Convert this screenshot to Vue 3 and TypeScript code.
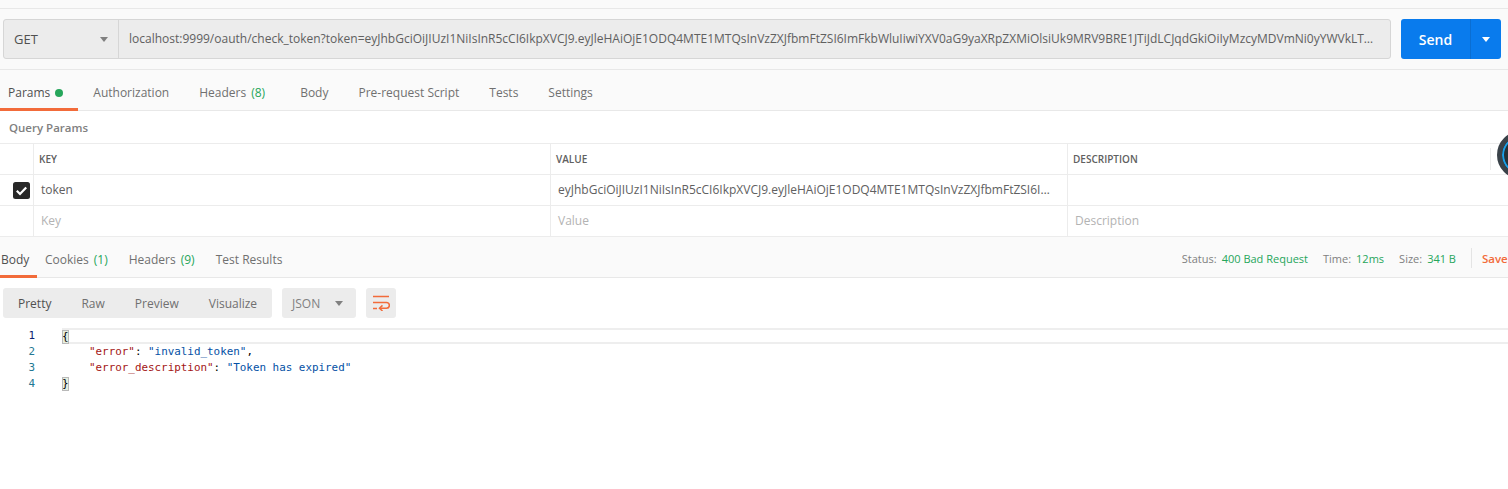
<script setup lang="ts">
interface Tab { label: string; count?: string; dot?: boolean; active?: boolean }
const reqTabs: Tab[] = [
  { label: 'Params', dot: true, active: true },
  { label: 'Authorization' },
  { label: 'Headers', count: '(8)' },
  { label: 'Body' },
  { label: 'Pre-request Script' },
  { label: 'Tests' },
  { label: 'Settings' },
]
const resTabs: Tab[] = [
  { label: 'Body', active: true },
  { label: 'Cookies', count: '(1)' },
  { label: 'Headers', count: '(9)' },
  { label: 'Test Results' },
]
const url = 'localhost:9999/oauth/check_token?token=eyJhbGciOiJIUzI1NiIsInR5cCI6IkpXVCJ9.eyJleHAiOjE1ODQ4MTE1MTQsInVzZXJfbmFtZSI6ImFkbWluIiwiYXV0aG9yaXRpZXMiOlsiUk9MRV9BRE1JTiJdLCJqdGkiOiIyMzcyMDVmNi0yYWVkLTQ5YjEtOGE3ZS1hNjE2OTk3ZTA4MGMiLCJjbGllbnRfaWQiOiJ0ZXN0In0'
const value = 'eyJhbGciOiJIUzI1NiIsInR5cCI6IkpXVCJ9.eyJleHAiOjE1ODQ4MTE1MTQsInVzZXJfbmFtZSI6ImFkbWluIiwiYXV0aG9yaXRpZXMi'
</script>

<template>
  <div class="page">
    <div class="top-strip"></div>
    <div class="request-bar">
      <div class="url-group">
        <div class="method"><span>GET</span><i class="caret gray"></i></div>
        <div class="url">{{ url }}</div>
      </div>
      <div class="send">
        <span class="send-label">Send</span>
        <span class="send-more"><i class="caret white"></i></span>
      </div>
    </div>

    <div class="tabs req-tabs">
      <div v-for="t in reqTabs" :key="t.label" class="tab" :class="{ active: t.active }">
        {{ t.label }}<span v-if="t.count" class="count">{{ t.count }}</span><i v-if="t.dot" class="dot"></i>
      </div>
    </div>

    <div class="query-title">Query Params</div>
    <div class="table">
      <div class="row head">
        <div class="cell check"></div>
        <div class="cell key">KEY</div>
        <div class="cell val">VALUE</div>
        <div class="cell desc">DESCRIPTION</div>
        <div class="cell end"></div>
      </div>
      <div class="row">
        <div class="cell check">
          <svg width="17" height="17" viewBox="0 0 17 17">
            <rect width="17" height="17" rx="2.5" fill="#282828" />
            <path d="M3.8 8.8 7 12 13.2 5.4" fill="none" stroke="#fff" stroke-width="2.2" />
          </svg>
        </div>
        <div class="cell key text">token</div>
        <div class="cell val text"><span class="clip">{{ value }}</span></div>
        <div class="cell desc"></div>
      </div>
      <div class="row">
        <div class="cell check"></div>
        <div class="cell key ph">Key</div>
        <div class="cell val ph">Value</div>
        <div class="cell desc ph">Description</div>
      </div>
    </div>

    <div class="tabs res-tabs">
      <div v-for="t in resTabs" :key="t.label" class="tab" :class="{ active: t.active }">
        {{ t.label }}<span v-if="t.count" class="count">{{ t.count }}</span>
      </div>
      <div class="status">
        <span>Status:<b>400 Bad Request</b></span>
        <span>Time:<b>12ms</b></span>
        <span>Size:<b>341 B</b></span>
        <i class="sep"></i>
        <span class="save">Save Response</span>
      </div>
    </div>

    <div class="toolbar">
      <div class="views">
        <span class="on">Pretty</span><span>Raw</span><span>Preview</span><span>Visualize</span>
      </div>
      <div class="lang"><span>JSON</span><i class="caret gray"></i></div>
      <div class="wrap">
        <svg width="18" height="16" viewBox="0 0 18 16" fill="none" stroke="#f26b3a" stroke-width="1.5">
          <path d="M1 1.5H17" />
          <path d="M1 7.5H14.5a2.6 2.6 0 0 1 0 5.7H8" />
          <path d="M1 13.5H5" />
          <path d="M10.5 10.4 7.5 13.2 10.5 16" />
        </svg>
      </div>
    </div>

    <div class="code">
      <div class="gutter"><div>1</div><div>2</div><div>3</div><div>4</div></div>
      <div class="lines">
        <div class="line current"><span class="match">{</span></div>
        <div class="line ind"><span class="k">"error"</span>: <span class="s">"invalid_token"</span>,</div>
        <div class="line ind"><span class="k">"error_description"</span>: <span class="s">"Token has expired"</span></div>
        <div class="line"><span class="match">}</span></div>
      </div>
    </div>

    <div class="float-badge"></div>
  </div>
</template>

<style>
html, body { margin: 0; background: #fff; overflow: hidden; }
</style>

<style scoped>
.page { position: relative; width: 1508px; height: 489px; overflow: hidden; background: #fff; font-family: "Open Sans", sans-serif; font-size: 12px; color: #505050; }
.top-strip { height: 8px; background: #fafafa; border-bottom: 1px solid #e8e8e8; }
.request-bar { height: 61px; box-sizing: border-box; padding: 10px 7px 0 3px; display: flex; gap: 10px; background: #fafafa; border-bottom: 1px solid #e8e8e8; }
.url-group { flex: 1; min-width: 0; height: 40px; box-sizing: border-box; display: flex; background: #ececec; border: 1px solid #d6d6d6; border-radius: 3px; }
.method { width: 115px; flex: none; box-sizing: border-box; padding: 0 10px 0 10px; display: flex; align-items: center; justify-content: space-between; border-right: 1px solid #d6d6d6; font-size: 13px; }
.url { flex: 1; min-width: 0; padding: 0 16px 0 10px; line-height: 38px; white-space: nowrap; overflow: hidden; text-overflow: ellipsis; color: #606060; font-size: 12px; }
.caret { display: block; width: 0; height: 0; border-left: 4px solid transparent; border-right: 4px solid transparent; }
.caret.gray { border-top: 5px solid #808080; }
.caret.white { border-top: 5px solid #fff; }
.send { width: 100px; height: 40px; flex: none; display: flex; background: #097bed; border-radius: 3px; color: #fff; }
.send-label { width: 69px; text-align: center; line-height: 41px; font-size: 14px; font-weight: 600; border-right: 1px solid #0a6ed2; }
.send-more { flex: 1; display: flex; align-items: center; justify-content: center; }

.tabs { display: flex; height: 41px; box-sizing: border-box; background: #fafafa; border-bottom: 1px solid #e8e8e8; }
.tab { position: relative; color: #707070; white-space: nowrap; }
.tab.active { color: #505050; }
.tab.active::after { content: ""; position: absolute; left: 0; right: 0; bottom: -1px; height: 3px; background: #f26b3a; }
.count { color: #26a65b; margin-left: 5px; }
.req-tabs .tab { padding: 0 15px; line-height: 45px; }
.req-tabs .tab:first-child { padding-left: 8px; }
.req-tabs .tab:nth-child(3) { padding-right: 20px; }
.dot { display: inline-block; width: 8px; height: 8px; margin-left: 5px; border-radius: 50%; background: #26a65b; }

.query-title { height: 33px; box-sizing: border-box; padding-left: 9px; line-height: 33px; font-weight: 600; font-size: 11.5px; color: #808080; border-bottom: 1px solid #ececec; }
.row { display: flex; height: 31px; box-sizing: border-box; border-bottom: 1px solid #ececec; }
.cell { box-sizing: border-box; padding-left: 7px; line-height: 29px; border-right: 1px solid #ececec; flex: none; min-width: 0; }
.check { width: 34px; padding: 0 0 0 13px; display: flex; align-items: center; }
.key { width: 517px; }
.val { width: 517px; }
.desc { width: 422px; border-right: 0; }
.end { width: 18px; flex: none; border-left: 1px solid #ececec; padding: 0; height: 22px; margin-top: 4px; }
.head .cell { font-size: 10px; font-weight: 600; color: #606060; padding-left: 5px; line-height: 30px; }
.head .check, .head .end { padding: 0; }
.text { color: #606060; }
.ph { color: #b3b3b3; }
.clip { display: block; width: 492px; white-space: nowrap; overflow: hidden; text-overflow: ellipsis; }

.res-tabs { align-items: stretch; }
.res-tabs .tab { padding: 0 1px; margin-right: 19px; line-height: 45px; }
.res-tabs .tab:first-child { width: 37px; box-sizing: border-box; margin-right: 7px; }
.status { margin-left: auto; display: flex; align-items: center; font-size: 11px; color: #808080; white-space: nowrap; padding-top: 2px; margin-right: -56px; }
.status > span { margin-right: 15px; }
.status b { font-weight: 400; color: #26a65b; margin-left: 5px; }
.sep { width: 1px; height: 20px; background: #e4e4e4; margin-right: 10px; }
.status .save { color: #f26b3a; font-weight: 600; font-size: 11.5px; margin: 0; }

.toolbar { display: flex; padding: 10px 0 0 3px; height: 50px; box-sizing: border-box; }
.views { width: 269px; height: 30px; display: flex; align-items: center; padding: 1px 0 0 15px; gap: 30px; box-sizing: border-box; background: #ececec; border-radius: 3px; color: #707070; }
.views .on { color: #505050; }
.lang { width: 74px; height: 30px; margin-left: 10px; padding: 1px 13px 0 10px; box-sizing: border-box; display: flex; align-items: center; justify-content: space-between; background: #ececec; border-radius: 3px; color: #808080; }
.wrap { width: 30px; height: 30px; margin-left: 10px; display: flex; align-items: center; justify-content: center; background: #ececec; border-radius: 3px; }

.code { display: flex; font-family: "DejaVu Sans Mono", monospace; font-size: 10.9px; line-height: 16px; }
.gutter { width: 62px; flex: none; box-sizing: border-box; text-align: right; padding: 0 27px 0 0; color: #237893; }
.gutter > div:first-child { color: #0b216f; }
.lines { flex: 1; }
.line { height: 16px; white-space: pre; color: #000; }
.line.ind { padding-left: 27px; }
.line.current { box-sizing: border-box; border-top: 2px solid #eee; border-bottom: 2px solid #eee; line-height: 12px; }
.match { display: inline-block; height: 14px; line-height: 14px; background: #e6efe0; outline: 1px solid #b9b9b9; outline-offset: -1px; }
.k { color: #a31515; }
.s { color: #0451a5; }

.float-badge { position: absolute; left: 1497px; top: 131px; width: 48px; height: 48px; box-sizing: border-box; border-radius: 50%; background: #263238; border: 5px solid #3a4249; box-shadow: inset 0 0 0 2px #1a9fe8; }
</style>
